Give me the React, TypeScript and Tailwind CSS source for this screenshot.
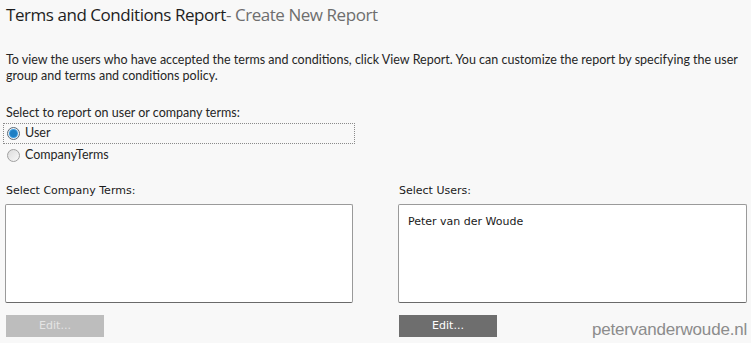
import React from "react";

export default function App() {
  return (
    <div className="w-[751px] h-[343px] bg-[#f8f8f8] overflow-hidden relative">
      <div className="pl-[6px] pt-[3px] font-['Open_Sans',sans-serif] text-[17px] leading-[24px] tracking-[-0.45px] text-[#1e1e1e] whitespace-nowrap">
        Terms and Conditions Report<span className="text-[#6e6e6e]">- Create New Report</span>
      </div>
      <div className="pl-[6px] pt-[25px] pr-[4px] font-['Lato',sans-serif] text-[12.5px] leading-[16px] text-[#262626]">
        To view the users who have accepted the terms and conditions, click View Report. You can customize the report by specifying the user group and terms and conditions policy.
      </div>
      <div className="pl-[6px] pt-[21px] font-['Lato',sans-serif] text-[12.5px] leading-[16px] text-[#262626]">
        Select to report on user or company terms:
      </div>
      <div className="pl-[3px] pt-[2px] w-[355px] font-['Lato',sans-serif] text-[12.5px] text-[#262626]">
        <div className="h-[21px] border border-dotted border-[#8a8a8a] flex items-center gap-[5px] pl-[3px]">
          <span className="w-[13px] h-[13px] rounded-full border border-[#5a6a78] bg-[#e8eef3] flex items-center justify-center">
            <span className="w-[7px] h-[7px] rounded-full bg-[#1e7fc4] shadow-[0_0_0_1px_#3a9be0]"></span>
          </span>
          <span>User</span>
        </div>
        <div className="h-[22px] flex items-center gap-[5px] pl-[4px]">
          <span className="w-[13px] h-[13px] rounded-full border border-[#a0a0a0] bg-gradient-to-br from-[#dcdcdc] to-[#f8f8f8]"></span>
          <span>CompanyTerms</span>
        </div>
      </div>
      <div className="grid grid-cols-[348px_349px] gap-x-[45px] pl-[5px] pt-[17px] font-['DejaVu_Sans',sans-serif] text-[11px] text-[#1a1a1a]">
        <div className="flex flex-col">
          <div className="pl-[1px] h-[15px] leading-[15px]">Select Company Terms:</div>
          <div className="mt-[6px] h-[99px] bg-white border border-[#9a9a9a] border-b-[#6a6a6a] rounded-[2px]"></div>
          <button className="mt-[12px] ml-[1px] w-[98px] h-[22px] bg-[#bdbdbd] text-[#e4e4e4] text-[11px] font-['DejaVu_Sans',sans-serif]">Edit...</button>
        </div>
        <div className="flex flex-col">
          <div className="pl-[1px] h-[15px] leading-[15px]">Select Users:</div>
          <div className="mt-[6px] h-[99px] bg-white border border-[#9a9a9a] border-b-[#6a6a6a] rounded-[2px] pl-[9px] pt-[9px] leading-[15px]">Peter van der Woude</div>
          <div className="flex items-end justify-between mt-[12px]">
            <button className="ml-[1px] w-[98px] h-[22px] bg-[#6e6e6e] text-white text-[11px] font-['DejaVu_Sans',sans-serif]">Edit...</button>
          </div>
        </div>
      </div>
      <div className="absolute right-[4px] bottom-[2px] font-['Liberation_Sans',sans-serif] text-[17px] leading-[22px] text-[#8c8c8c] tracking-[-0.2px]">
        petervanderwoude.nl
      </div>
    </div>
  );
}
